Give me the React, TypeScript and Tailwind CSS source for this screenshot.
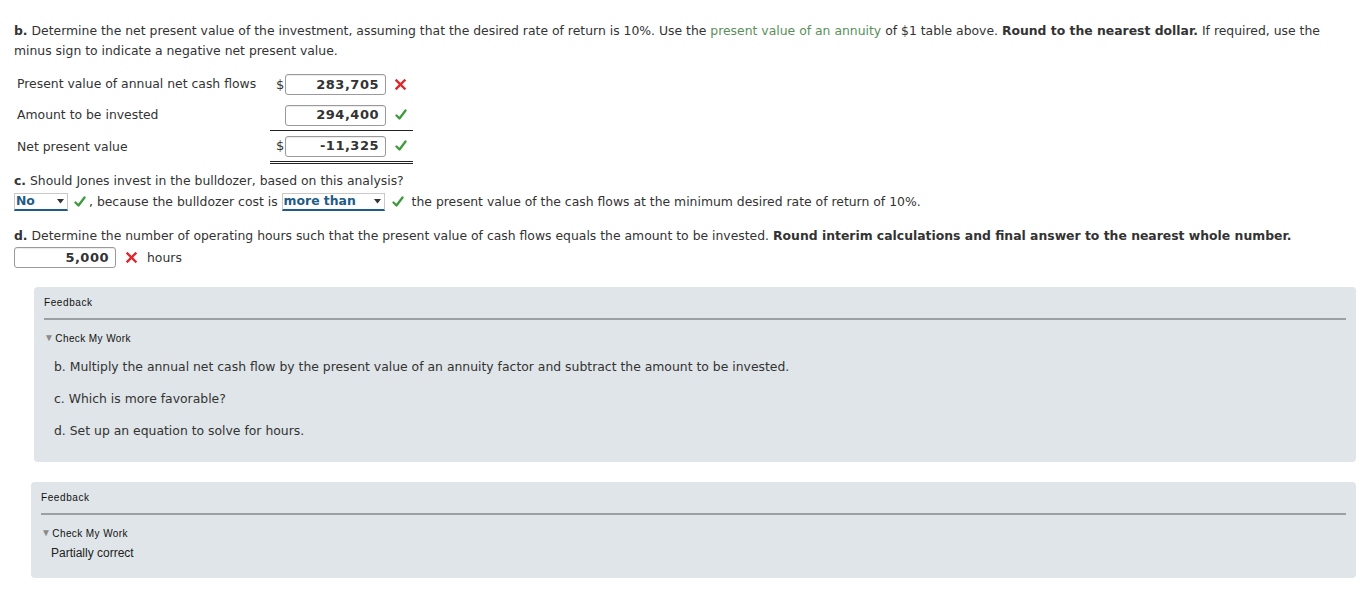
const Check = () => (
    <svg width="12" height="12" viewBox="0 0 12 12" className="shrink-0">
        <path d="M1.5 6.5 L4.5 9.5 L10.5 1.5" fill="none" stroke="#3d9a3d" strokeWidth="2.3" strokeLinecap="round" strokeLinejoin="round" />
    </svg>
)

const Cross = () => (
    <svg width="11" height="11" viewBox="0 0 11 11" className="shrink-0">
        <path d="M1.5 1.5 L9.5 9.5 M9.5 1.5 L1.5 9.5" fill="none" stroke="#e0262b" strokeWidth="2.4" strokeLinecap="square" />
    </svg>
)

function NumBox({ value, width = 'w-[101px]' }: { value: string; width?: string }) {
    return (
        <div
            className={`${width} h-[21px] border border-[#9a9a9a] rounded-[3px] bg-white flex items-center justify-end pr-[6px] font-bold text-[13px] text-[#333] tracking-[0.5px] shadow-[inset_0_1px_1px_rgba(0,0,0,0.08)]`}
        >
            {value}
        </div>
    )
}

function Select({ label, width }: { label: string; width: string }) {
    return (
        <div className={`${width} h-[18px] border border-[#c9c9c9] border-b-2 border-b-[#1f5c86] flex items-center justify-between pl-[1px] pr-[3px] text-[#1f5c86] font-bold leading-none`}>
            <span>{label}</span>
            <svg width="7" height="5" viewBox="0 0 7 5">
                <path d="M0 0 H7 L3.5 4.5 Z" fill="#333" />
            </svg>
        </div>
    )
}

function Feedback({ indent, children }: { indent: string; children: React.ReactNode }) {
    return (
        <div className={`${indent} mr-[4px] bg-[#dfe5e8] rounded-[4px]`}>
            <div className="px-[10px] pt-[9px]">
                <div className="font-['Liberation_Sans',Arial,sans-serif] text-[10px] tracking-[0.6px] text-[#111] h-[14px] leading-[14px]">
                    Feedback
                </div>
                <div className="mt-[8px] border-t-2 border-[#9aa0a3]" />
                <div className="mt-[11px] flex items-center gap-[1px] font-['Liberation_Sans',Arial,sans-serif] text-[10px] tracking-[0.4px] text-[#111] h-[14px]">
                    <span className="text-[#8a8a8a] text-[10px] leading-none">▼</span>
                    <span>Check My Work</span>
                </div>
                {children}
            </div>
        </div>
    )
}

export default function App() {
    const rows = [
        { label: 'Present value of annual net cash flows', dollar: true, value: '283,705', ok: false },
        { label: 'Amount to be invested', dollar: false, value: '294,400', ok: true },
        { label: 'Net present value', dollar: true, value: '-11,325', ok: true },
    ]

    return (
        <div className="min-h-[592px] bg-white text-[12.4px] text-[#333] font-['DejaVu_Sans',Verdana,sans-serif] pt-[21px]">
            <div className="px-[14px] leading-[20px]">
                <p>
                    <b>b.</b> Determine the net present value of the investment, assuming that the desired rate of return is 10%. Use the{' '}
                    <span className="text-[#5a8f5a]">present value of an annuity</span> of $1 table above.{' '}
                    <b>Round to the nearest dollar.</b> If required, use the minus sign to indicate a negative net present value.
                </p>
            </div>

            <div className="mt-[8px] pl-[17px]">
                {rows.map((row, i) => (
                    <div key={row.label} className={`flex items-center ${i === 2 ? 'h-[33px]' : 'h-[31px]'}`}>
                        <div className="w-[253px]">{row.label}</div>
                        <div
                            className={`w-[143px] h-full flex items-center ${i === 1 ? 'border-b border-[#222]' : ''} ${i === 2 ? 'border-b-[3px] border-double border-[#222]' : ''}`}
                        >
                            <span className="w-[15px] pl-[6px] text-[13px]">{row.dollar ? '$' : ''}</span>
                            <NumBox value={row.value} />
                            <span className="ml-[9px]">{row.ok ? <Check /> : <Cross />}</span>
                        </div>
                    </div>
                ))}
            </div>

            <div className="px-[14px] mt-[7px] leading-[20px]">
                <p>
                    <b>c.</b> Should Jones invest in the bulldozer, based on this analysis?
                </p>
                <div className="flex items-center h-[21px]">
                    <Select label="No" width="w-[54px]" />
                    <span className="ml-[6px]"><Check /></span>
                    <span className="ml-[3px]">, because the bulldozer cost is&nbsp;</span>
                    <Select label="more than" width="w-[103px]" />
                    <span className="ml-[7px]"><Check /></span>
                    <span className="ml-[8px]">the present value of the cash flows at the minimum desired rate of return of 10%.</span>
                </div>

                <p className="mt-[14px]">
                    <b>d.</b> Determine the number of operating hours such that the present value of cash flows equals the amount to be invested.{' '}
                    <b>Round interim calculations and final answer to the nearest whole number.</b>
                </p>
                <div className="flex items-center mt-[1px]">
                    <NumBox value="5,000" width="w-[102px]" />
                    <span className="ml-[10px]"><Cross /></span>
                    <span className="ml-[10px]">hours</span>
                </div>
            </div>

            <div className="mt-[19px]">
                <Feedback indent="ml-[34px]">
                    <div className="pl-[10px] mt-[12px] pb-[21px] leading-[20px] space-y-[12px] text-[#333]">
                        <p>b. Multiply the annual net cash flow by the present value of an annuity factor and subtract the amount to be invested.</p>
                        <p>c. Which is more favorable?</p>
                        <p>d. Set up an equation to solve for hours.</p>
                    </div>
                </Feedback>
            </div>

            <div className="mt-[20px]">
                <Feedback indent="ml-[31px]">
                    <div className="pl-[10px] mt-[5px] pb-[17px] font-['Liberation_Sans',Arial,sans-serif] text-[12px] text-[#222] leading-[16px]">
                        Partially correct
                    </div>
                </Feedback>
            </div>
        </div>
    )
}
